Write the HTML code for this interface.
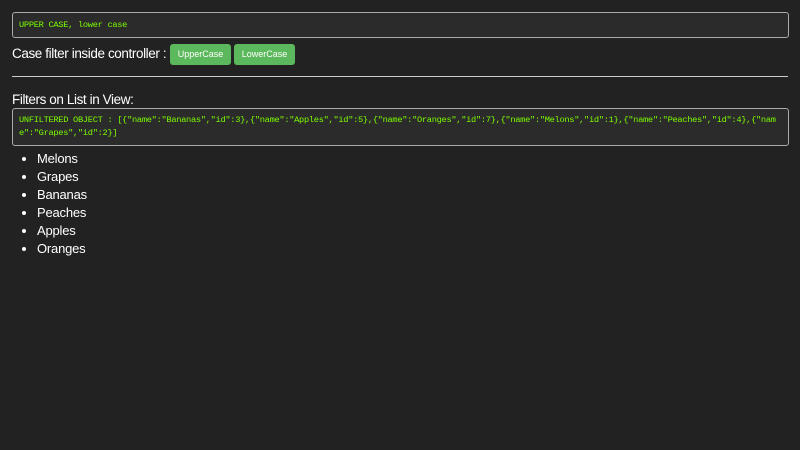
<!DOCTYPE html>
<html><head><style>
html,body{margin:0;background:#222;width:800px;height:450px;overflow:hidden}
body{font-family:"Liberation Sans",sans-serif;color:#fff;position:relative}
pre{position:absolute;left:12px;width:763px;margin:0;background:#2b2b2b;border:1px solid #aaa;border-radius:3px;padding:0 6px;font-family:"Liberation Mono",monospace;font-size:8.7px;letter-spacing:-0.3px;color:#7cfc00;white-space:pre;overflow:hidden;line-height:13px}
.h{position:absolute;left:12px;font-size:13.5px;letter-spacing:-0.4px;line-height:18px}
.btn{position:absolute;top:44px;height:21px;background:#5cb85c;border-radius:3px;color:#fff;font-size:9px;line-height:21px;text-align:center}
hr{position:absolute;left:12px;width:776px;margin:0;border:0;border-top:1px solid #ccc}
ul{position:absolute;left:0;top:150px;margin:0;padding-left:37px;font-size:13px;letter-spacing:-0.2px;line-height:18px}
</style></head><body>
<pre style="top:12px;height:24px;line-height:24px">UPPER CASE, lower case</pre>
<div class="h" style="top:45px">Case filter inside controller :</div>
<div class="btn" style="left:170px;width:61px">UpperCase</div>
<div class="btn" style="left:234px;width:61px">LowerCase</div>
<hr style="top:76px">
<div class="h" style="top:91px">Filters on List in View:</div>
<pre style="top:108px;padding-top:5px;padding-bottom:5px;height:26px">UNFILTERED OBJECT : [{"name":"Bananas","id":3},{"name":"Apples","id":5},{"name":"Oranges","id":7},{"name":"Melons","id":1},{"name":"Peaches","id":4},{"nam
e":"Grapes","id":2}]</pre>
<ul><li>Melons</li><li>Grapes</li><li>Bananas</li><li>Peaches</li><li>Apples</li><li>Oranges</li></ul>
</body></html>
